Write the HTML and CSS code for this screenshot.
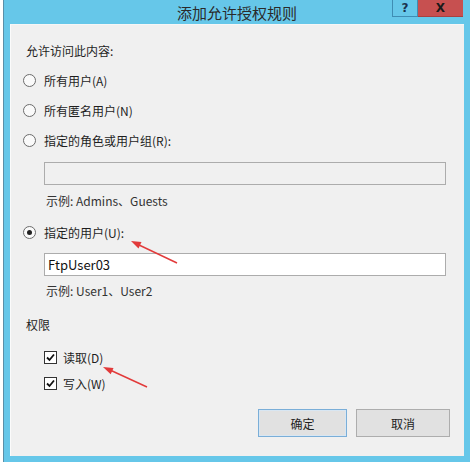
FILE: index.html
```html
<!doctype html>
<html>
	<head>
		<meta charset="utf-8">
		<link rel="stylesheet" href="styles.css">
	</head>
	<body>
		<div class="window">
			<div class="titlebar">
				<div class="title">添加允许授权规则</div>
				<div class="caption-buttons">
					<div class="cap-btn help">?</div>
					<div class="cap-btn close">X</div>
				</div>
			</div>
			<div class="content">
				<div class="row heading">允许访问此内容:</div>

				<div class="row radio r1"><span class="dot"></span>所有用户(A)</div>
				<div class="row radio r2"><span class="dot"></span>所有匿名用户(N)</div>
				<div class="row radio r3"><span class="dot"></span>指定的角色或用户组(R):</div>
				<div class="field disabled i1"></div>
				<div class="row example e1">示例: Admins、Guests</div>

				<div class="row radio r4"><span class="dot checked"></span>指定的用户(U):</div>
				<div class="field i2">FtpUser03</div>
				<div class="row example e2">示例: User1、User2</div>

				<div class="row heading h2">权限</div>
				<div class="row check c1"><span class="box"><svg viewBox="0 0 11 11" width="11" height="11"><path d="M2 5.5 L4.5 8 L9 2.5" fill="none" stroke="#111" stroke-width="1.8"/></svg></span>读取(D)</div>
				<div class="row check c2"><span class="box"><svg viewBox="0 0 11 11" width="11" height="11"><path d="M2 5.5 L4.5 8 L9 2.5" fill="none" stroke="#111" stroke-width="1.8"/></svg></span>写入(W)</div>

				<div class="buttons">
					<div class="btn default">确定</div>
					<div class="btn cancel">取消</div>
				</div>
			</div>
		</div>

		<svg class="arrows" width="474" height="470" viewBox="0 0 474 470">
			<line x1="177" y1="263" x2="138" y2="244.5" stroke="#e23a3a" stroke-width="1.4"/>
			<polygon points="131,241 138.5,248.5 141.5,242.1" fill="#e23a3a"/>
			<line x1="147" y1="387" x2="110" y2="370" stroke="#e23a3a" stroke-width="1.4"/>
			<polygon points="103,367 110.7,374.3 113.5,367.9" fill="#e23a3a"/>
		</svg>
	</body>
</html>
```

FILE: styles.css
```css
body {
	margin: 0;
	background: #fff;
	font-family: "Noto Sans CJK SC", "Noto Sans", sans-serif;
	font-size: 12px;
	color: #1e1e1e;
	position: relative;
	width: 474px;
	height: 470px;
	overflow: hidden;
}

.window {
	margin-left: 4px;
	width: 466px;
	height: 462px;
	background: #66c7e9;
	box-shadow: -1px 0 0 #5a8fa8;
	display: flex;
	flex-direction: column;
}

.titlebar {
	height: 24px;
	position: relative;
	display: flex;
	justify-content: center;
	align-items: center;
}
	.title {
		font-size: 15px;
		color: #2a2a2a;
		line-height: 24px;
		margin-top: 2px;
	}
	.caption-buttons {
		position: absolute;
		top: 0;
		right: 7px;
		display: flex;
	}
	.cap-btn {
		height: 17px;
		display: flex;
		align-items: center;
		justify-content: center;
		font-family: "DejaVu Sans", sans-serif;
		font-weight: bold;
		font-size: 12px;
		box-sizing: border-box;
	}
	.help {
		width: 26px;
		border: 1px solid #3f8db3;
		border-top: none;
		color: #1a3350;
	}
	.close {
		width: 45px;
		background: #c75050;
		color: #1a1a1a;
		border-bottom: 1px solid #a84040;
	}

.content {
	margin: 0 6px 6px 6px;
	flex: 1;
	background: #f0f0f0;
	border-left: 1px solid #fbfbfb;
	border-top: 1px solid #f6f6f6;
	box-sizing: border-box;
	padding-top: 15px;
	display: flex;
	flex-direction: column;
}

.row {
	height: 20px;
	display: flex;
	align-items: center;
	white-space: nowrap;
}

.heading {
	padding-left: 15px;
}
.h2 { margin-top: 13px; }

.radio {
	padding-left: 12px;
}
	.radio .dot {
		width: 11px;
		height: 11px;
		border: 1px solid #6c6c6c;
		border-radius: 50%;
		background: #fafafa;
		margin-right: 8px;
		display: flex;
		align-items: center;
		justify-content: center;
	}
	.radio .dot.checked::after {
		content: "";
		width: 5px;
		height: 5px;
		border-radius: 50%;
		background: #222;
	}
.r1 { margin-top: 10px; }
.r2 { margin-top: 10px; }
.r3 { margin-top: 10px; }
.r4 { margin-top: 12px; }

.field {
	margin-left: 33px;
	width: 402px;
	height: 23px;
	border: 1px solid #acacac;
	box-sizing: border-box;
	background: #fff;
	font-size: 13px;
	line-height: 21px;
	padding-left: 3px;
	color: #111;
}
.field.disabled {
	background: #f0f0f0;
}
.i1 { margin-top: 12px; }
.i2 { margin-top: 11px; }

.example {
	padding-left: 35px;
	color: #333;
}
.e1 { margin-top: 5px; }
.e2 { margin-top: 4px; }

.check {
	padding-left: 33px;
}
	.check .box {
		width: 11px;
		height: 11px;
		border: 1px solid #333;
		background: #fff;
		margin-right: 6px;
		display: flex;
	}
.h2 { margin-top: 14px; }
.c1 { margin-top: 13px; }
.c2 { margin-top: 6px; }

.buttons {
	margin-top: 16px;
	display: flex;
	justify-content: flex-end;
	gap: 9px;
	padding-right: 14px;
}
	.btn {
		height: 28px;
		box-sizing: border-box;
		background: #e1e1e1;
		border: 1px solid #adadad;
		display: flex;
		align-items: center;
		justify-content: center;
	}
	.btn.default {
		width: 89px;
		border-color: #7aaed8;
		box-shadow: inset 0 0 0 1px #d8e6f2;
	}
	.btn.cancel {
		width: 94px;
	}

.arrows {
	position: absolute;
	left: 0;
	top: 0;
	pointer-events: none;
}
```
